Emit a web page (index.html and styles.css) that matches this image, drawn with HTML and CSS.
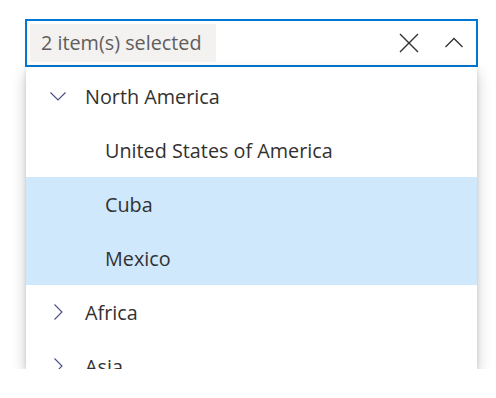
FILE: index.html
```html
<!DOCTYPE html>
<html>
<head>
<meta charset="utf-8">
<link rel="stylesheet" href="styles.css">
</head>
<body>
<div class="wrap">
  <div class="combo">
    <span class="chip">2 item(s) selected</span>
    <span class="spacer"></span>
    <svg class="icon clear" width="20" height="20" viewBox="0 0 20 20"><path d="M1 1 L19 19 M19 1 L1 19" stroke="#323130" stroke-width="1.4" fill="none"/></svg>
    <svg class="icon up" width="20" height="20" viewBox="0 0 20 20"><path d="M1.5 14 L10 5.5 L18.5 14" stroke="#323130" stroke-width="1.3" fill="none"/></svg>
  </div>
  <div class="popup">
    <div class="row group">
      <svg class="chev" width="16" height="16" viewBox="0 0 16 16"><path d="M0.5 4.5 L8 12 L15.5 4.5" stroke="#4a4a8a" stroke-width="1.1" fill="none"/></svg>
      <span>North America</span>
    </div>
    <div class="row child">United States of America</div>
    <div class="row child sel">Cuba</div>
    <div class="row child sel">Mexico</div>
    <div class="row group">
      <svg class="chev" width="16" height="16" viewBox="0 0 16 16"><path d="M4.5 0.5 L12 8 L4.5 15.5" stroke="#4a4a8a" stroke-width="1.1" fill="none"/></svg>
      <span>Africa</span>
    </div>
    <div class="row group">
      <svg class="chev" width="16" height="16" viewBox="0 0 16 16"><path d="M4.5 0.5 L12 8 L4.5 15.5" stroke="#4a4a8a" stroke-width="1.1" fill="none"/></svg>
      <span>Asia</span>
    </div>
  </div>
</div>
</body>
</html>
```
FILE: styles.css
```css
html, body {
  margin: 0;
  padding: 0;
  background: #ffffff;
}
body {
  font-family: "Open Sans", "Noto Sans", sans-serif;
  color: #323130;
}
.wrap {
  padding: 19px 0 0 25px;
  width: 453px;
}
.combo {
  box-sizing: border-box;
  width: 453px;
  height: 48px;
  border: 2px solid #0078d4;
  display: flex;
  align-items: center;
  padding: 0 12px 0 3px;
}
.chip {
  background: #f3f2f1;
  color: #605e5c;
  font-size: 19.8px;
  height: 38px;
  line-height: 38px;
  padding: 0 0 0 11px;
  box-sizing: border-box;
  width: 186px;
  white-space: nowrap;
}
.spacer { flex: 1; }
.icon { display: block; }
.clear { margin-right: 25px; }
.popup {
  margin-left: 1px;
  width: 451px;
  height: 302px;
  overflow: hidden;
  box-sizing: border-box;
  padding-top: 2px;
  background: #fff;
  box-shadow: 0 6px 14px rgba(0,0,0,0.22), 0 1px 4px rgba(0,0,0,0.12);
}
.row {
  height: 54px;
  display: flex;
  align-items: center;
  font-size: 19.8px;
}
.group { padding-left: 24px; }
.chev { display: block; margin-right: 19px; }
.child { padding-left: 79px; }
.sel { background: #cfe8fc; }
```
